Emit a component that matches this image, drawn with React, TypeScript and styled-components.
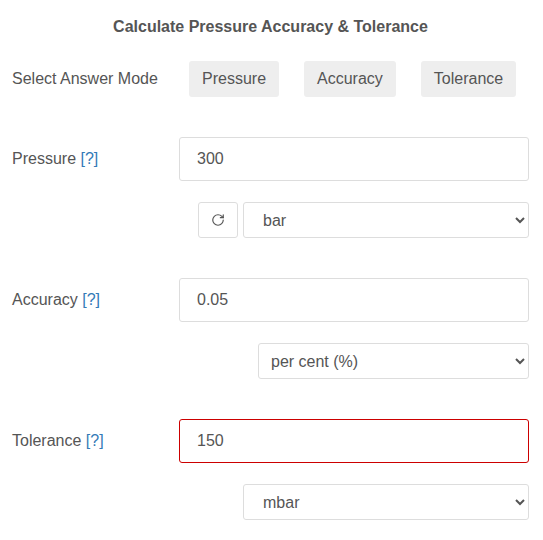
import React from "react"
import styled, { createGlobalStyle } from "styled-components"

const GlobalStyle = createGlobalStyle`
  body {
    margin: 0;
    background: #fff;
    font-family: "Liberation Sans", Arial, sans-serif;
    color: #555;
  }
`

const Page = styled.div`
  width: 543px;
  box-sizing: border-box;
  padding: 17px 14px 0 12px;
`

const Title = styled.h1`
  margin: 0;
  font-size: 16px;
  line-height: 20px;
  font-weight: 700;
  text-align: center;
  color: #555;
`

const ModeRow = styled.div`
  display: flex;
  align-items: center;
  margin-top: 24px;
  height: 36px;
`

const ModeLabel = styled.span`
  font-size: 16px;
  width: 177px;
`

const ModeButtons = styled.div`
  display: flex;
  gap: 25px;
`

const ModeButton = styled.button`
  height: 36px;
  padding: 0 13px;
  border: none;
  border-radius: 3px;
  background: #eee;
  color: #555;
  font-family: inherit;
  font-size: 16px;
  cursor: pointer;
`

const Field = styled.div`
  display: grid;
  grid-template-columns: 167px 1fr;
  row-gap: 21px;
  margin-top: 40px;
`

const Label = styled.label`
  align-self: center;
  font-size: 16px;
`

const Help = styled.a`
  color: #337ab7;
  text-decoration: none;
`

const TextInput = styled.input<{ $invalid?: boolean }>`
  box-sizing: border-box;
  width: 100%;
  height: 44px;
  padding: 0 17px;
  border: 1px solid ${({ $invalid }) => ($invalid ? "#cc0000" : "#ddd")};
  border-radius: 3px;
  font-family: inherit;
  font-size: 16px;
  color: #555;
  outline: none;
`

const UnitRow = styled.div`
  grid-column: 2;
  display: flex;
  justify-content: flex-end;
  gap: 5px;
  height: 36px;
`

const IconButton = styled.button`
  width: 40px;
  height: 36px;
  padding: 0;
  border: 1px solid #ddd;
  border-radius: 3px;
  background: #fff;
  color: #555;
  display: flex;
  align-items: center;
  justify-content: center;
`

const Select = styled.select<{ $width: number; $indent: number }>`
  box-sizing: border-box;
  width: ${({ $width }) => $width}px;
  height: 36px;
  padding: 0 6px 0 ${({ $indent }) => $indent}px;
  border: 1px solid #ddd;
  border-radius: 3px;
  background: #fff;
  font-family: inherit;
  font-size: 16px;
  color: #555;
  outline: none;
`

const RefreshIcon = () => (
  <svg width="14" height="14" viewBox="0 0 24 24" fill="none" stroke="currentColor" strokeWidth="2" strokeLinecap="round" strokeLinejoin="round">
    <path d="M21 12a9 9 0 1 1-9-9c2.52 0 4.93 1 6.74 2.74L21 8" />
    <path d="M21 3v5h-5" />
  </svg>
)

export default function App() {
  return (
    <Page>
      <GlobalStyle />
      <Title>Calculate Pressure Accuracy &amp; Tolerance</Title>

      <ModeRow>
        <ModeLabel>Select Answer Mode</ModeLabel>
        <ModeButtons>
          <ModeButton>Pressure</ModeButton>
          <ModeButton>Accuracy</ModeButton>
          <ModeButton>Tolerance</ModeButton>
        </ModeButtons>
      </ModeRow>

      <Field>
        <Label>
          Pressure <Help href="#">[?]</Help>
        </Label>
        <TextInput defaultValue="300" />
        <UnitRow>
          <IconButton>
            <RefreshIcon />
          </IconButton>
          <Select $width={286} $indent={15} defaultValue="bar">
            <option value="bar">bar</option>
            <option value="mbar">mbar</option>
          </Select>
        </UnitRow>
      </Field>

      <Field>
        <Label>
          Accuracy <Help href="#">[?]</Help>
        </Label>
        <TextInput defaultValue="0.05" />
        <UnitRow>
          <Select $width={271} $indent={8} defaultValue="pc">
            <option value="pc">per cent (%)</option>
          </Select>
        </UnitRow>
      </Field>

      <Field>
        <Label>
          Tolerance <Help href="#">[?]</Help>
        </Label>
        <TextInput $invalid defaultValue="150" />
        <UnitRow>
          <Select $width={286} $indent={15} defaultValue="mbar">
            <option value="bar">bar</option>
            <option value="mbar">mbar</option>
          </Select>
        </UnitRow>
      </Field>
    </Page>
  )
}
